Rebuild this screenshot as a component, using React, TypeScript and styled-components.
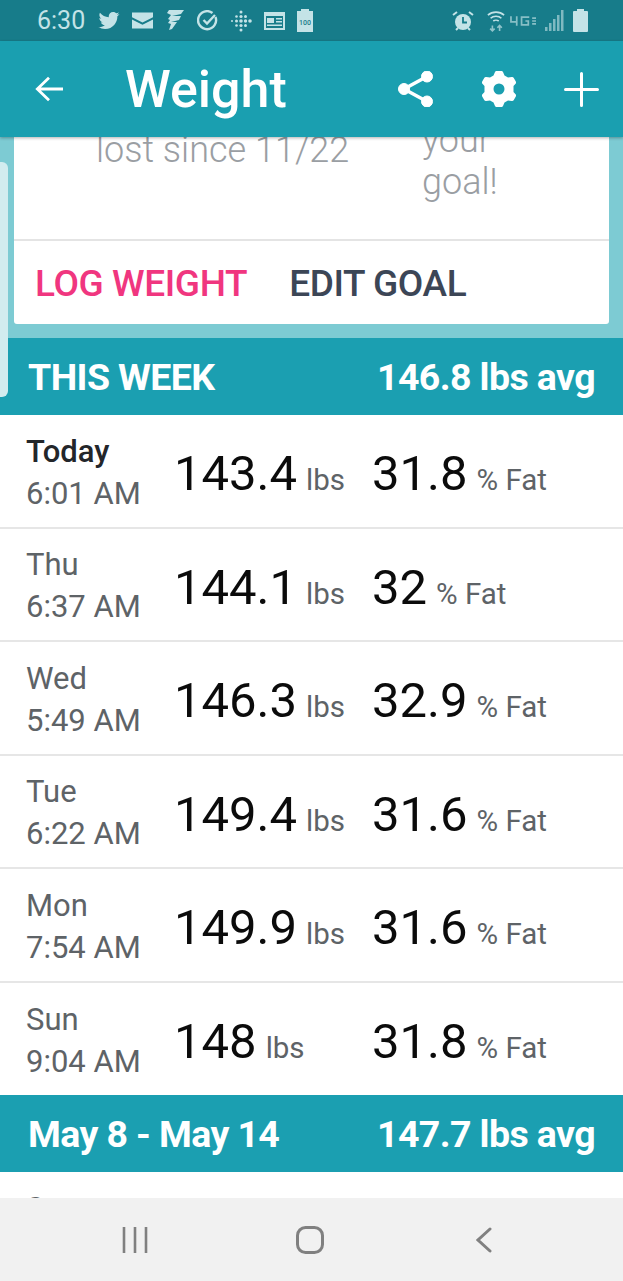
import React from 'react';
import styled, { createGlobalStyle } from 'styled-components';
import { FaTwitter } from 'react-icons/fa';

const Global = createGlobalStyle`
  html, body {
    margin: 0;
    padding: 0;
    background: #fff;
    font-family: Roboto, "Liberation Sans", sans-serif;
  }
`;

const Screen = styled.div`
  display: flex;
  flex-direction: column;
  width: 623px;
  height: 1281px;
  overflow: hidden;
`;

const StatusBar = styled.div`
  display: flex;
  align-items: center;
  justify-content: space-between;
  flex: 0 0 41px;
  padding: 0 35px 0 37px;
  background: #177c8a;
  color: #c4e3e7;
`;

const StatusGroup = styled.div`
  display: flex;
  align-items: center;
  gap: ${props => props.$gap}px;
`;

const Clock = styled.span`
  font-size: 25px;
  margin-right: 1px;
`;

const Header = styled.header`
  position: relative;
  z-index: 2;
  display: flex;
  align-items: center;
  flex: 0 0 96px;
  padding: 0 24px 0 35px;
  background: #1a9fb0;
  box-shadow: 0 1px 3px rgba(0, 0, 0, 0.3);
  color: #fff;
`;

const Title = styled.h1`
  flex: 1;
  margin: 0 0 0 62px;
  font-size: 52px;
  font-weight: 500;
`;

const HeaderActions = styled.div`
  display: flex;
  align-items: center;
  gap: 48px;
`;

const Scroller = styled.main`
  position: relative;
  flex: 1;
  overflow: hidden;
`;

const Peek = styled.div`
  position: absolute;
  left: 0;
  top: 25px;
  width: 8px;
  height: 235px;
  border-radius: 0 6px 6px 0;
  background: #d2ecef;
`;

const Hero = styled.section`
  height: 201px;
  padding: 0 14px 14px;
  box-sizing: border-box;
  background: #7dcbd3;
`;

const Card = styled.div`
  height: 187px;
  border-radius: 0 0 3px 3px;
  background: #fff;
`;

const Summary = styled.div`
  display: flex;
  height: 102px;
  overflow: hidden;
  border-bottom: 2px solid #e4e4e4;
  color: #9a9ea3;
  font-size: 36px;
  font-weight: 300;
`;

const SummaryLost = styled.div`
  flex: 0 0 326px;
  margin: -8px 0 0 82px;
  line-height: 42px;
`;

const SummaryGoal = styled.div`
  width: 100px;
  margin-top: -18px;
  line-height: 42px;
`;

const Actions = styled.div`
  display: flex;
  align-items: center;
  gap: 42px;
  height: 85px;
  padding: 0 0 0 21px;
  font-size: 37px;
  font-weight: 500;
`;

const Action = styled.span`
  color: ${props => props.$color};
  letter-spacing: -0.4px;
`;

const Band = styled.div`
  display: flex;
  align-items: center;
  justify-content: space-between;
  height: 77px;
  padding: 0 28px;
  background: #1b9fb1;
  color: #fff;
  font-size: 37.5px;
  font-weight: 700;
  letter-spacing: -0.6px;
`;

const Row = styled.div`
  display: flex;
  align-items: center;
  height: 113.5px;
  box-sizing: border-box;
  padding: 4px 0 0 26px;
  border-bottom: 2px solid #e6e6e6;
`;

const LastRow = styled(Row)`
  height: 112.5px;
  border-bottom: 0;
`;

const DateCell = styled.div`
  flex: 0 0 148px;
  font-size: 31px;
  line-height: 42px;
  color: #5e6367;
`;

const Day = styled.div`
  color: ${props => (props.$today ? '#23262a' : '#5e6367')};
  font-weight: ${props => (props.$today ? 500 : 400)};
`;

const Reading = styled.div`
  display: flex;
  align-items: baseline;
  flex: 0 0 ${props => props.$width}px;
  margin-top: 2px;
`;

const Value = styled.span`
  font-size: 49px;
  color: #0b0b0b;
`;

const Unit = styled.span`
  margin-left: 9px;
  font-size: 29.5px;
  color: #5e6367;
`;

const NavBar = styled.nav`
  display: flex;
  align-items: center;
  flex: 0 0 83px;
  padding-left: 48px;
  background: #f1f1f1;
`;

const NavSlot = styled.div`
  display: flex;
  justify-content: center;
  flex: 0 0 174.5px;
`;

const Twitter = styled(FaTwitter)`
  width: 22px;
  height: 21px;
`;

const Mail = () => (
  <svg width="21" height="17" viewBox="0 0 22 17" fill="currentColor">
    <path d="M0 0h22v5l-11 5.500L0 5z" />
    <path d="M0 7.500l11 5.500 11-5.500V17H0z" />
  </svg>
);

const Bolt = () => (
  <svg width="20" height="21" viewBox="0 0 18 21" fill="currentColor">
    <path d="M3 0h15l-3 4-9 2h9l-2 4-8 2h6l-5 7-3 1 2-6-3-1 2-3-2-1 3-4-4-2z" />
  </svg>
);

const CheckRing = () => (
  <svg width="21" height="21" viewBox="0 0 21 21" fill="none" stroke="currentColor" strokeWidth="2.400">
    <path d="M18.500 7a9 9 0 1 1-3-4" />
    <path d="M6.500 10l3.500 3.500 8-8.500" />
  </svg>
);

const FITBIT_DOTS: [number, number, number][] = [
  [2, 11, 1], [6.5, 6.5, 1.3], [6.5, 11, 1.5], [6.5, 15.5, 1.3], [11, 2, 1.5], [11, 6.5, 1.6], [11, 11, 1.8],
  [11, 15.5, 1.6], [11, 20, 1.5], [15.5, 6.5, 1.5], [15.5, 11, 1.7], [15.5, 15.5, 1.5], [20, 11, 1.8],
];

const Fitbit = () => (
  <svg width="22" height="22" viewBox="0 0 22 22" fill="currentColor">
    {FITBIT_DOTS.map(([x, y, r]) => (
      <circle key={`${x}-${y}`} cx={x} cy={y} r={r} />
    ))}
  </svg>
);

const Calendar = () => (
  <svg width="21" height="18" viewBox="0 0 21 18">
    <path fill="currentColor" d="M0 0h21v18H0z" />
    <path fill="#177c8a" d="M2 4h17v12H2z" />
    <path fill="currentColor" d="M3 6h7v5H3zM12 6h6v1.500h-6zM12 9h6v1.500h-6zM3 12.500h15V14H3z" />
  </svg>
);

const BatterySaver = () => (
  <svg width="16" height="23" viewBox="0 0 16 23">
    <path fill="currentColor" d="M4 0h8v2h4v21H0V2h4z" />
    <text x="8" y="16" fill="#177c8a" fontSize="7" fontWeight="500" textAnchor="middle" fontFamily="Roboto, sans-serif">
      100
    </text>
  </svg>
);

const Alarm = () => (
  <svg width="22" height="22" viewBox="0 0 22 22" fill="none">
    <circle cx="11" cy="12" r="8" fill="currentColor" />
    <path stroke="#177c8a" strokeWidth="1.800" d="M11 7v5.500h4" />
    <path stroke="currentColor" strokeWidth="2" d="M1 5l4-3M21 5l-4-3M4 20l2-2M18 20l-2-2" />
  </svg>
);

const Wifi = () => (
  <svg width="18" height="24" viewBox="0 0 20 24" fill="none" stroke="currentColor" strokeWidth="1.800">
    <path d="M1 5.500c5-4.500 13-4.500 18 0M4 9c3-3 9-3 12 0M7 12c1.500-1.200 4.500-1.200 6 0" />
    <path opacity="0.7" d="M6 17v6M3.500 20.500L6 23l2.500-2.500M14 23v-6M11.500 19.500L14 17l2.500 2.500" />
  </svg>
);

const Lte = () => (
  <svg width="26" height="12" viewBox="0 0 27 12" fill="none" stroke="currentColor" strokeWidth="1.800" opacity="0.65">
    <path d="M1 1v6h6M7 1v10M20 2h-8v8h7V6h-3M23 3h4M23 6h4M23 9h4" />
  </svg>
);

const Signal = () => (
  <svg width="19" height="21" viewBox="0 0 19 21" fill="currentColor" opacity="0.6">
    <path d="M0 17h2.500v4H0zM4 13h2.500v8H4zM8 9h2.500v12H8zM12 5h2.500v16H12zM16 0h2.500v21H16z" />
  </svg>
);

const Battery = () => (
  <svg width="15" height="23" viewBox="0 0 15 23" fill="currentColor">
    <path d="M4 0h7v2h3a1 1 0 0 1 1 1v19a1 1 0 0 1-1 1H1a1 1 0 0 1-1-1V3a1 1 0 0 1 1-1h3z" />
  </svg>
);

const BackArrow = () => (
  <svg width="28" height="28" viewBox="0 0 30 30" fill="none" stroke="#fff" strokeWidth="3">
    <path d="M30 15H3M15 3L2.500 15 15 27" />
  </svg>
);

const Share = () => (
  <svg width="36" height="36" viewBox="0 0 36 36" fill="#fff" stroke="#fff">
    <circle cx="6" cy="18" r="5.500" />
    <circle cx="29" cy="5.500" r="5.500" />
    <circle cx="29" cy="30.500" r="5.500" />
    <path fill="none" strokeWidth="3.500" d="M29 5.500L6 18l23 12.500" />
  </svg>
);

const Gear = () => (
  <svg width="34" height="36" viewBox="0 0 34 36">
    <path
      fill="#fff"
      fillRule="evenodd"
      d="M13 1a2 2 0 0 1 2-1h4a2 2 0 0 1 2 1l1.500 3.500 3.500 2 3.800-.5a2 2 0 0 1 2 1l2 3.500a2 2 0 0 1 0 2L31.500 15v6l2.300 2.500a2 2 0 0 1 0 2l-2 3.500a2 2 0 0 1-2 1l-3.800-.5-3.500 2L21 35a2 2 0 0 1-2 1h-4a2 2 0 0 1-2-1l-1.500-3.500-3.500-2-3.800.5a2 2 0 0 1-2-1l-2-3.500a2 2 0 0 1 0-2L2.500 21v-6L.2 12.500a2 2 0 0 1 0-2l2-3.500a2 2 0 0 1 2-1l3.800.5 3.500-2zM17 12.500a5.500 5.500 0 1 0 0 11 5.500 5.500 0 0 0 0-11z"
    />
  </svg>
);

const Plus = () => (
  <svg width="35" height="35" viewBox="0 0 35 35" stroke="#fff" strokeWidth="3" strokeLinecap="round">
    <path d="M17.500 1.500v32M1.500 17.500h32" />
  </svg>
);

const Recents = () => (
  <svg width="26" height="26" viewBox="0 0 26 26" stroke="#808080" strokeWidth="2.600">
    <path d="M2 0v26M13 0v26M24 0v26" />
  </svg>
);

const Home = () => (
  <svg width="28" height="28" viewBox="0 0 28 28" fill="none" stroke="#808080" strokeWidth="3">
    <rect x="1.500" y="1.500" width="25" height="25" rx="8" />
  </svg>
);

const Back = () => (
  <svg width="16" height="26" viewBox="0 0 16 26" fill="none" stroke="#808080" strokeWidth="3" strokeLinecap="round">
    <path d="M14 2L2 13l12 11" />
  </svg>
);

const THIS_WEEK = [
  { day: 'Today', time: '6:01 AM', weight: '143.4', fat: '31.8', today: true },
  { day: 'Thu', time: '6:37 AM', weight: '144.1', fat: '32' },
  { day: 'Wed', time: '5:49 AM', weight: '146.3', fat: '32.9' },
  { day: 'Tue', time: '6:22 AM', weight: '149.4', fat: '31.6' },
  { day: 'Mon', time: '7:54 AM', weight: '149.9', fat: '31.6' },
  { day: 'Sun', time: '9:04 AM', weight: '148', fat: '31.8' },
];

export default function App() {
  return (
    <Screen>
      <Global />
      <StatusBar>
        <StatusGroup $gap={12}>
          <Clock>6:30</Clock>
          <Twitter />
          <Mail />
          <Bolt />
          <CheckRing />
          <Fitbit />
          <Calendar />
          <BatterySaver />
        </StatusGroup>
        <StatusGroup $gap={9}>
          <StatusGroup $gap={13}>
            <Alarm />
            <StatusGroup $gap={5}>
              <Wifi />
              <Lte />
            </StatusGroup>
          </StatusGroup>
          <Signal />
          <Battery />
        </StatusGroup>
      </StatusBar>
      <Header>
        <BackArrow />
        <Title>Weight</Title>
        <HeaderActions>
          <Share />
          <Gear />
          <Plus />
        </HeaderActions>
      </Header>
      <Scroller>
        <Hero>
          <Card>
            <Summary>
              <SummaryLost>lost since 11/22</SummaryLost>
              <SummaryGoal>
                your
                <br />
                goal!
              </SummaryGoal>
            </Summary>
            <Actions>
              <Action $color="#f0367f">LOG WEIGHT</Action>
              <Action $color="#3c4656">EDIT GOAL</Action>
            </Actions>
          </Card>
        </Hero>
        <Band>
          <span>THIS WEEK</span>
          <span>146.8 lbs avg</span>
        </Band>
        {THIS_WEEK.map((entry, index) => {
          const Item = index === THIS_WEEK.length - 1 ? LastRow : Row;
          return (
            <Item key={entry.day}>
              <DateCell>
                <Day $today={entry.today}>{entry.day}</Day>
                {entry.time}
              </DateCell>
              <Reading $width={198}>
                <Value>{entry.weight}</Value>
                <Unit>lbs</Unit>
              </Reading>
              <Reading $width={220}>
                <Value>{entry.fat}</Value>
                <Unit>% Fat</Unit>
              </Reading>
            </Item>
          );
        })}
        <Band>
          <span>May 8 - May 14</span>
          <span>147.7 lbs avg</span>
        </Band>
        <Row>
          <DateCell>
            <Day>Sat</Day>
            <br />
          </DateCell>
        </Row>
        <Peek />
      </Scroller>
      <NavBar>
        <NavSlot>
          <Recents />
        </NavSlot>
        <NavSlot>
          <Home />
        </NavSlot>
        <NavSlot>
          <Back />
        </NavSlot>
      </NavBar>
    </Screen>
  );
}
